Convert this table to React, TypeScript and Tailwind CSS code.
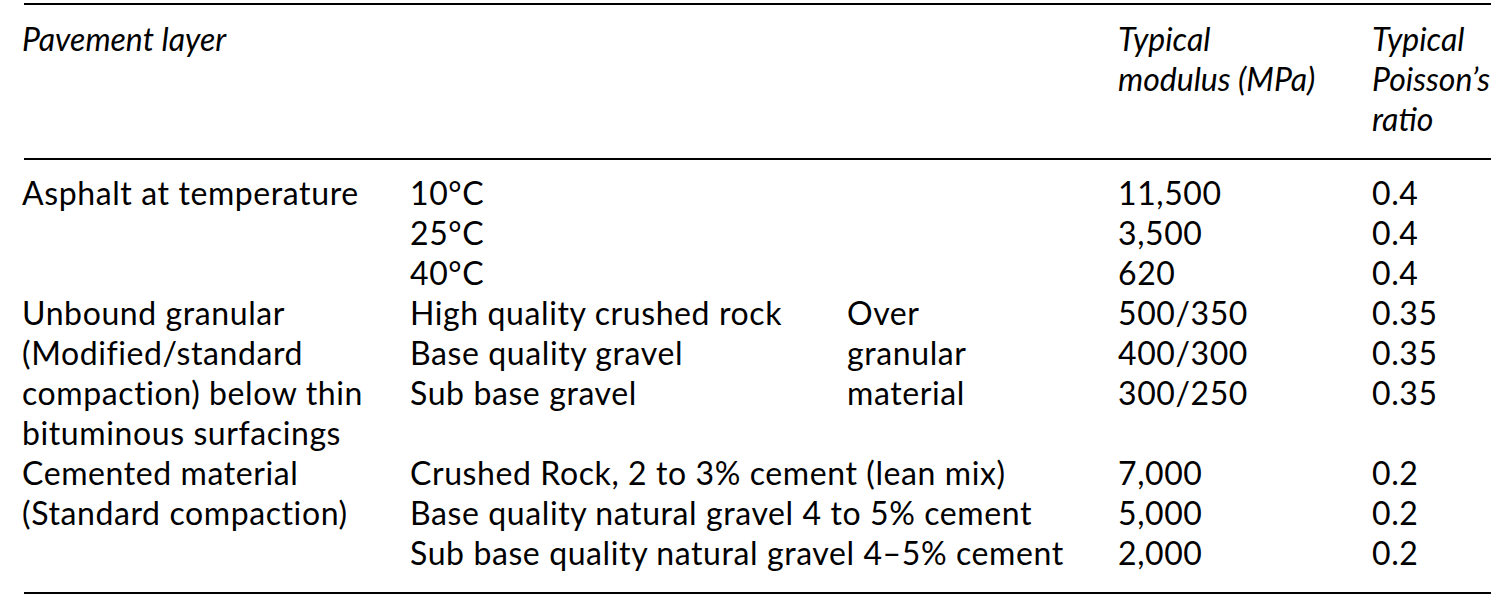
const cols = "grid grid-cols-[386px_437px_271px_254px_1fr]";

export default function App() {
  return (
    <div className="min-h-screen bg-white pt-[3px] font-['Lato',sans-serif] text-[32px] leading-[40px] text-black">
      <div className="ml-[24px] w-[1467px] border-y-2 border-black">
        {/* header */}
        <div className={`${cols} border-b-2 border-black pt-[14px] pb-[19px] italic`}>
          <div className="col-start-1 -ml-[2px]">Pavement layer</div>
          <div className="col-start-4">
            Typical
            <br />
            modulus (MPa)
          </div>
          <div className="col-start-5 whitespace-nowrap">
            Typical
            <br />
            Poisson’s
            <br />
            ratio
          </div>
        </div>

        {/* body */}
        <div className={`${cols} grid-rows-[repeat(10,40px)] pt-[13px] pb-[19px] tracking-[0.6px] whitespace-nowrap`}>
          <div className="col-start-1 row-start-1 -ml-[2px]">Asphalt at temperature</div>
          <div className="col-start-2 row-start-1">10°C</div>
          <div className="col-start-4 row-start-1">11,500</div>
          <div className="col-start-5 row-start-1">0.4</div>
          <div className="col-start-2 row-start-2">25°C</div>
          <div className="col-start-4 row-start-2">3,500</div>
          <div className="col-start-5 row-start-2">0.4</div>
          <div className="col-start-2 row-start-3">40°C</div>
          <div className="col-start-4 row-start-3">620</div>
          <div className="col-start-5 row-start-3">0.4</div>

          <div className="col-start-1 row-start-4 row-span-4 -ml-[2px]">
            Unbound granular
            <br />
            (Modified/standard
            <br />
            compaction) below thin
            <br />
            bituminous surfacings
          </div>
          <div className="col-start-2 row-start-4">High quality crushed rock</div>
          <div className="col-start-3 row-start-4 row-span-3">
            Over
            <br />
            granular
            <br />
            material
          </div>
          <div className="col-start-4 row-start-4">500/350</div>
          <div className="col-start-5 row-start-4">0.35</div>
          <div className="col-start-2 row-start-5">Base quality gravel</div>
          <div className="col-start-4 row-start-5">400/300</div>
          <div className="col-start-5 row-start-5">0.35</div>
          <div className="col-start-2 row-start-6">Sub base gravel</div>
          <div className="col-start-4 row-start-6">300/250</div>
          <div className="col-start-5 row-start-6">0.35</div>

          <div className="col-start-1 row-start-8 row-span-2 -ml-[2px]">
            Cemented material
            <br />
            (Standard compaction)
          </div>
          <div className="col-start-2 col-span-2 row-start-8">Crushed Rock, 2 to 3% cement (lean mix)</div>
          <div className="col-start-4 row-start-8">7,000</div>
          <div className="col-start-5 row-start-8">0.2</div>
          <div className="col-start-2 col-span-2 row-start-9">Base quality natural gravel 4 to 5% cement</div>
          <div className="col-start-4 row-start-9">5,000</div>
          <div className="col-start-5 row-start-9">0.2</div>
          <div className="col-start-2 col-span-2 row-start-10">Sub base quality natural gravel 4–5% cement</div>
          <div className="col-start-4 row-start-10">2,000</div>
          <div className="col-start-5 row-start-10">0.2</div>
        </div>
      </div>
    </div>
  );
}
